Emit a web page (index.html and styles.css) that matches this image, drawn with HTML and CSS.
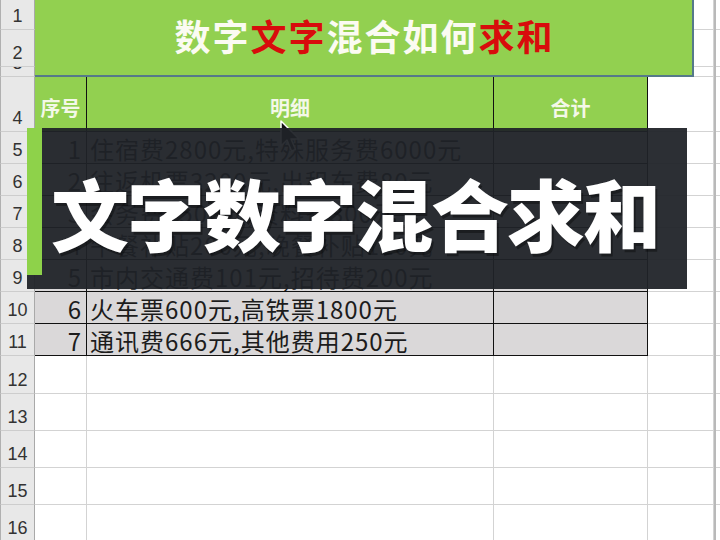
FILE: index.html
```html
<!DOCTYPE html>
<html lang="zh-CN">
<head>
<meta charset="utf-8">
<title>文字数字混合求和</title>
<link rel="stylesheet" href="styles.css">
</head>
<body>
<div class="screen">
  <div class="sheet">
    <div class="row h30"><div class="rh">1</div><div class="c"></div><div class="c"></div><div class="c"></div><div class="c"></div><div class="sb"></div><div class="c end"></div></div>
    <div class="row h37"><div class="rh">2</div><div class="c"></div><div class="c"></div><div class="c"></div><div class="c"></div><div class="sb"></div><div class="c end"></div></div>
    <div class="row h10"><div class="rh">3</div><div class="c"></div><div class="c"></div><div class="c"></div><div class="c"></div><div class="sb"></div><div class="c end"></div></div>
    <div class="row h55"><div class="rh">4</div><div class="th">序号</div><div class="th">明细</div><div class="th">合计</div><div class="c"></div><div class="sb"></div><div class="c end"></div></div>
    <div class="row h32"><div class="rh">5</div><div class="td num">1</div><div class="td txt">住宿费2800元,特殊服务费6000元</div><div class="td"></div><div class="c"></div><div class="sb"></div><div class="c end"></div></div>
    <div class="row h32"><div class="rh">6</div><div class="td num">2</div><div class="td txt">往返机票3200元,出租车费80元</div><div class="td"></div><div class="c"></div><div class="sb"></div><div class="c end"></div></div>
    <div class="row h32"><div class="rh">7</div><div class="td num">3</div><div class="td txt">会务费1500元,资料费300元</div><div class="td"></div><div class="c"></div><div class="sb"></div><div class="c end"></div></div>
    <div class="row h32"><div class="rh">8</div><div class="td num">4</div><div class="td txt">午餐补贴200元,晚餐补贴120元</div><div class="td"></div><div class="c"></div><div class="sb"></div><div class="c end"></div></div>
    <div class="row h32"><div class="rh">9</div><div class="td num">5</div><div class="td txt">市内交通费101元,招待费200元</div><div class="td"></div><div class="c"></div><div class="sb"></div><div class="c end"></div></div>
    <div class="row h32"><div class="rh">10</div><div class="td num">6</div><div class="td txt">火车票600元,高铁票1800元</div><div class="td"></div><div class="c"></div><div class="sb"></div><div class="c end"></div></div>
    <div class="row h32"><div class="rh">11</div><div class="td num">7</div><div class="td txt">通讯费666元,其他费用250元</div><div class="td"></div><div class="c"></div><div class="sb"></div><div class="c end"></div></div>
    <div class="row h38"><div class="rh">12</div><div class="c"></div><div class="c"></div><div class="c"></div><div class="c"></div><div class="sb"></div><div class="c end"></div></div>
    <div class="row h37"><div class="rh">13</div><div class="c"></div><div class="c"></div><div class="c"></div><div class="c"></div><div class="sb"></div><div class="c end"></div></div>
    <div class="row h37"><div class="rh">14</div><div class="c"></div><div class="c"></div><div class="c"></div><div class="c"></div><div class="sb"></div><div class="c end"></div></div>
    <div class="row h37"><div class="rh">15</div><div class="c"></div><div class="c"></div><div class="c"></div><div class="c"></div><div class="sb"></div><div class="c end"></div></div>
    <div class="row h37"><div class="rh">16</div><div class="c"></div><div class="c"></div><div class="c"></div><div class="c"></div><div class="sb"></div><div class="c end"></div></div>
  </div>

  <div class="title-shape">数字<span class="red">文字</span>混合如何<span class="red">求和</span></div>

  <svg class="cursor" width="22" height="34" viewBox="0 0 22 34">
    <path d="M1 1 L1 26 L7 20 L11.5 31 L15.5 29.5 L11 19 L19 19 Z" fill="#111" stroke="#fff" stroke-width="1.5" stroke-linejoin="round"/>
  </svg>

  <div class="banner">
    <div class="banner-accent"></div>
    <div class="banner-text">文字数字混合求和</div>
  </div>
</div>
</body>
</html>
```
FILE: styles.css
```css
* { box-sizing: border-box; }
html, body { margin: 0; padding: 0; background: #fff; }
body { font-family: "Noto Sans CJK SC", "Noto Sans", sans-serif; }

.screen {
  position: relative;
  width: 720px;
  height: 540px;
  overflow: hidden;
  background: #fff;
}

.sheet { display: flex; flex-direction: column; }

.row {
  display: grid;
  grid-template-columns: 35px 52px 407px 154px 66px 2px 4px;
  flex: none;
}
.h10 { height: 10px; }
.h30 { height: 30px; }
.h32 { height: 32px; }
.h37 { height: 37px; }
.h38 { height: 38px; }
.h55 { height: 55px; }

.rh {
  background: #e8e8e8;
  border-right: 1px solid #a9a9a9;
  border-bottom: 1px solid #cdcdcd;
  border-left: 1px solid #b0b0b0;
  color: #333;
  font-family: "Liberation Sans", "Noto Sans", sans-serif;
  font-size: 18px;
  line-height: 18px;
  display: flex;
  align-items: flex-end;
  justify-content: center;
  padding-bottom: 4px;
  overflow: hidden;
}

.c {
  border-right: 1px solid #d3d3d3;
  border-bottom: 1px solid #d3d3d3;
}
.c.end { border-right: none; }

.sb { background: #b9b9b9; }

.th {
  background: #92d050;
  border-right: 1px solid #111;
  border-bottom: 1px solid #111;
  color: #f4f8e8;
  font-weight: 700;
  font-size: 20px;
  display: flex;
  align-items: center;
  justify-content: center;
  padding-top: 6px;
}

.td {
  background: #dad8d9;
  border-right: 1px solid #111;
  border-bottom: 1px solid #111;
  color: #1c1c1c;
  font-size: 24px;
  line-height: 28px;
  display: flex;
  align-items: flex-end;
  white-space: nowrap;
  overflow: hidden;
}
.td.num { justify-content: flex-end; padding-right: 5px; }
.td.txt { padding-left: 3px; letter-spacing: 1px; }

.title-shape {
  position: absolute;
  left: 35px;
  top: 0;
  width: 659px;
  height: 77px;
  background: #92d050;
  border-right: 2px solid #55798a;
  border-bottom: 2px solid #55798a;
  color: #fbfbf2;
  font-weight: 700;
  font-size: 36px;
  letter-spacing: 2px;
  display: flex;
  align-items: center;
  justify-content: center;
  padding-left: 2px;
  padding-bottom: 6px;
}
.title-shape .red { color: #d80c0c; }

.cursor {
  position: absolute;
  left: 280px;
  top: 120px;
}

.banner {
  position: absolute;
  left: 27px;
  top: 128px;
  width: 660px;
  height: 161px;
  background: rgba(31, 34, 39, 0.94);
  display: flex;
  align-items: center;
  padding-left: 24px;
  padding-top: 6px;
}
.banner-accent {
  position: absolute;
  left: 0;
  top: 0;
  width: 15px;
  height: 147px;
  background: #8ed24a;
}
.banner-text {
  color: #fff;
  font-family: "Noto Sans CJK SC", sans-serif;
  font-weight: 900;
  font-size: 78px;
  line-height: 1;
  letter-spacing: -2px;
  white-space: nowrap;
  text-shadow: 2px 3px 0 rgba(0, 0, 0, 0.35);
}
```
